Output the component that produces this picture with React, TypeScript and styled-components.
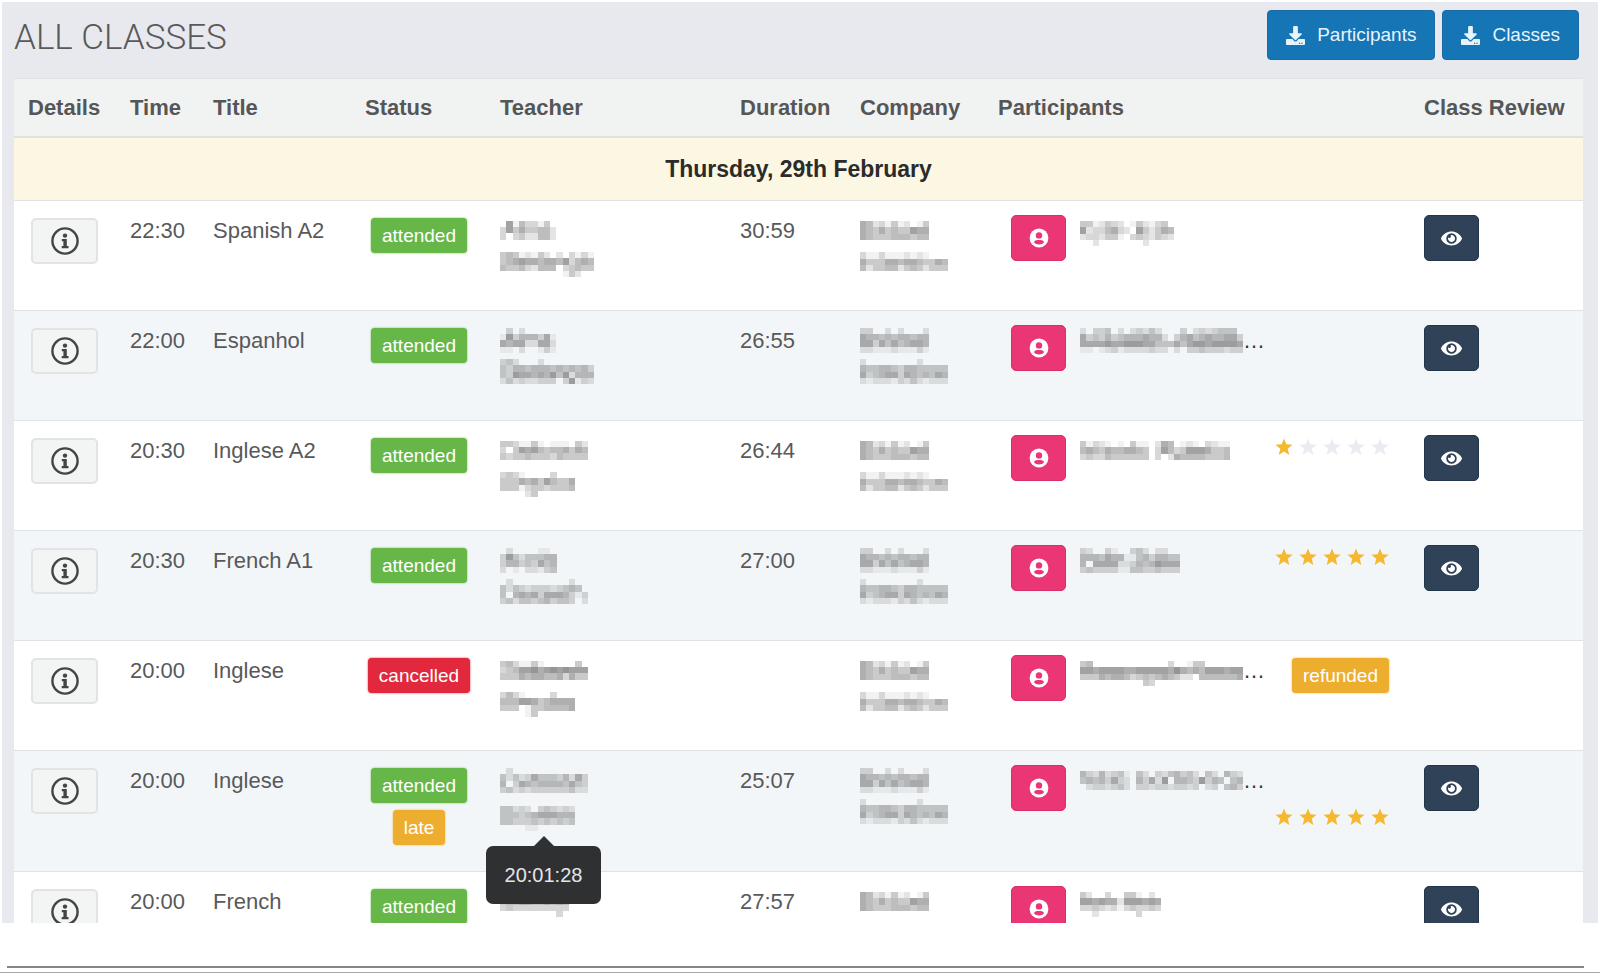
import React from 'react';
import styled, { createGlobalStyle, css } from 'styled-components';
import { FaDownload, FaEye } from 'react-icons/fa';

const GlobalStyle = createGlobalStyle`
  * { box-sizing: border-box; }
  body {
    margin: 0;
    background: #fff;
    color: #58595b;
    font-family: "Liberation Sans", Arial, Helvetica, sans-serif;
    font-size: 22px;
    line-height: 32px;
  }
`;

const Page = styled.div`
  display: flex;
  flex-direction: column;
  height: 100vh;
`;

const Panel = styled.main`
  flex: 1;
  min-height: 0;
  margin: 2px 2px 0;
  padding: 8px 15px 0 12px;
  overflow: hidden;
  background: #e8e9ee;
`;

const Toolbar = styled.header`
  display: flex;
  align-items: flex-start;
  justify-content: space-between;
  height: 68px;
  padding-right: 4px;
`;

const Heading = styled.h1`
  margin: 8px 0 0;
  font-family: Roboto, "Liberation Sans", sans-serif;
  font-size: 35px;
  font-weight: 300;
  line-height: 40px;
`;

const Actions = styled.div`
  display: flex;
  gap: 7px;
`;

const ExportButton = styled.button`
  display: flex;
  align-items: center;
  gap: 12px;
  height: 50px;
  padding: 0 18px;
  border: 1px solid #1a6ba5;
  border-radius: 4px;
  background: #1575b5;
  color: #e6f4fd;
  font: inherit;
  font-size: 19px;
`;

const Table = styled.table`
  width: 100%;
  table-layout: fixed;
  border-collapse: separate;
  border-spacing: 0;
`;

const HeadCell = styled.th`
  height: 60px;
  padding: 0 0 0 14px;
  border-top: 1px solid #e0e2e3;
  border-bottom: 2px solid #e0e2e1;
  background: #f1f3f3;
  color: #555657;
  text-align: left;
  white-space: nowrap;
`;

const DateCell = styled.th`
  height: 62px;
  padding: 0;
  background: #fcf7e2;
  color: #2b2b2b;
  font-size: 23px;
`;

const Row = styled.tr<{ $tall?: boolean }>`
  height: ${(p) => (p.$tall ? 121 : 110)}px;
  background: #fff;
  &:nth-child(odd) { background: #f3f6f8; }
`;

const Cell = styled.td`
  position: relative;
  padding: 14px 0 0 14px;
  border-top: 1px solid #e0e3e6;
  vertical-align: top;
`;

const buttonBase = css`
  display: flex;
  align-items: center;
  justify-content: center;
  height: 46px;
  padding: 0;
  border-radius: 5px;
`;

const InfoButton = styled.button`
  ${buttonBase}
  width: 67px;
  margin: 3px 0 0 3px;
  border: 2px solid #e2e3e4;
  background: #f3f4f4;
  color: #444;
`;

const PersonButton = styled.button`
  ${buttonBase}
  flex: none;
  width: 55px;
  border: 1px solid #d82f65;
  background: #ea3674;
  color: #fff;
`;

const ReviewButton = styled.button`
  ${buttonBase}
  width: 55px;
  border: 1px solid #22364b;
  background: #2f4257;
  color: #fff;
`;

const badgeColors = {
  attended: '#67b748',
  cancelled: '#e2283c',
  late: '#edae2f',
  refunded: '#edae2f',
};

type BadgeKind = keyof typeof badgeColors;

const BadgeStack = styled.div`
  display: flex;
  flex-direction: column;
  align-items: center;
  gap: 7px;
  padding: 3px 13px 0 0;
`;

const Badge = styled.span<{ $kind: BadgeKind }>`
  height: 35px;
  padding: 0 11px;
  border-radius: 4px;
  background: ${(p) => badgeColors[p.$kind]};
  box-shadow: 0 0 2px ${(p) => badgeColors[p.$kind]};
  color: #fff;
  font-size: 19px;
  line-height: 36px;
`;

const Participant = styled.div`
  display: flex;
  gap: 14px;
  padding: 0 21px 0 13px;
`;

const NameSlot = styled.div`
  display: flex;
  flex: 1;
  min-width: 0;
  color: #333;
`;

const Extra = styled.div<{ $low?: boolean }>`
  display: flex;
  align-items: flex-start;
  padding-top: ${(p) => (p.$low ? 43 : 3)}px;
`;

const Stars = styled.div`
  display: flex;
  gap: 6px;
`;

const Tooltip = styled.div`
  position: absolute;
  z-index: 2;
  top: 95px;
  left: 0;
  width: 115px;
  padding: 13px 0;
  border-radius: 7px;
  background: #2f3032;
  color: #e4e5e6;
  font-size: 20px;
  text-align: center;
  &::before {
    content: "";
    position: absolute;
    top: -10px;
    left: 48px;
    border: solid transparent;
    border-width: 0 10px 10px;
    border-bottom-color: #2f3032;
  }
`;

const Footer = styled.footer`
  display: flex;
  flex-direction: column;
  justify-content: flex-end;
  height: 50px;
  padding-bottom: 4px;
  border-bottom: 1px solid #a8a8a8;
  &::before {
    content: "";
    height: 2px;
    margin: 0 16px 0 7px;
    background: #858585;
  }
`;

const MosaicSvg = styled.svg<{ $high?: boolean }>`
  display: block;
  flex: none;
  margin-top: ${(p) => (p.$high ? 3 : 6)}px;
`;

const CELL = 6.25;

/* Redacted name: one digit per block, 0 is clear and 9 is darkest. */
function Mosaic({ rows, high }: { rows: string[]; high?: boolean }) {
  const cols = Math.max(...rows.map((r) => r.length));
  return (
    <MosaicSvg
      $high={high}
      role="img"
      aria-label="Name hidden"
      width={Math.round(cols * CELL)}
      height={Math.round(rows.length * CELL)}
      viewBox={`0 0 ${cols} ${rows.length}`}
      preserveAspectRatio="none"
      shapeRendering="crispEdges"
    >
      {rows.flatMap((row, y) =>
        [...row].map((d, x) =>
          d === '0' ? null : (
            <rect key={`${x}-${y}`} x={x} y={y} width="1" height="1" fill="#000" fillOpacity={Number(d) * 0.052} />
          ),
        ),
      )}
    </MosaicSvg>
  );
}

function InfoIcon() {
  return (
    <svg width="28" height="28" viewBox="0 0 28 28" aria-hidden="true">
      <circle cx="14" cy="14" r="12.6" fill="none" stroke="currentColor" strokeWidth="2.4" />
      <circle cx="14" cy="8.6" r="2.2" fill="currentColor" />
      <path d="M10.8 12h5v7h1.7v2.2h-6.8V19h1.7v-4.800h-1.600z" fill="currentColor" />
    </svg>
  );
}

function PersonIcon() {
  return (
    <svg width="20" height="20" viewBox="0 0 20 20" aria-hidden="true">
      <circle cx="10" cy="10" r="9.4" fill="currentColor" />
      <circle cx="10" cy="7.400" r="3.200" fill="#ea3674" />
      <path d="M5 14.300c0-1.700 2.300-2.300 5-2.300s5 .6 5 2.300c-1 1.600-3 2.200-5 2.200s-4-.6-5-2.200z" fill="#ea3674" />
    </svg>
  );
}

function Star({ filled }: { filled: boolean }) {
  return (
    <svg width="18" height="18" viewBox="0 0 18 18" aria-hidden="true">
      <path
        d="M9 .4l2.300 5.900 6.300.4-4.900 4 1.600 6.300L9 13.500 3.700 17l1.600-6.300-4.900-4 6.300-.4z"
        fill={filled ? '#f5b82e' : '#ebecf2'}
      />
    </svg>
  );
}

const companyPlain = [
  '65231412014', '65464544766', '65444555455', '0', '0',
  '31131112121000', '64446656654465', '52445524542444',
];
const companyStriped = [
  '33002020002', '65545455455', '66364645665', '22111211131', '0',
  '20000000020000', '54455435544444', '63456636545465', '21222132421222',
];

const almaPlain = [
  '071533140', '374644552', '303422552', '0', '0',
  '454121420203131', '456766566573565', '544532555034544', '000000000014200',
];
const almaStriped = [
  '0302', '173555361', '656622662', '110200131', '0',
  '342000200000000', '435545554545453', '437665657472555', '242322333037132',
];
const deborahPlain = [
  '44311410111042', '30476754556465', '43445444354444', '0', '0',
  '343100003', '444656475446', '444134434445', '00002400',
];
const deborahStriped = [
  '02000000000000', '42423644435263', '50365455554643', '34232333333422', '0', '0',
  '442320343232', '444345666555', '443334343434', '00001100',
];
const deborahDark = [
  '45311410000040', '34577867878777', '44465665563644', '0', '0',
  '353100003', '555776456666', '444014455556', '00001400',
];
const anaisStriped = [
  '020000110', '374244455', '355343645', '201022134', '0',
  '02000000000200', '42432333234540', '40565636665313', '34244345344302',
];
const lastTeacher = ['34311410030', '45566556565', '34333333333', '00000000030'];

interface Lesson {
  time: string;
  title: string;
  status: BadgeKind[];
  teacher: string[];
  duration?: string;
  name: string[];
  truncated?: boolean;
  stars?: number;
  refunded?: boolean;
  tooltip?: string;
}

const lessons: Lesson[] = [
  {
    time: '22:30', title: 'Spanish A2', status: ['attended'], teacher: almaPlain, duration: '30:59',
    name: ['441243201421340', '723356320742465', '233244103432432', '002000000020000'],
  },
  {
    time: '22:00', title: 'Espanhol', status: ['attended'], teacher: almaStriped, duration: '26:55', truncated: true,
    name: ['20334020232420003023234440', '63435345556552035645655663', '66667667776644464677677776', '11012312222322020334333233'],
  },
  {
    time: '20:30', title: 'Inglese A2', status: ['attended'], teacher: deborahPlain, duration: '26:44', stars: 1,
    name: ['413210104110265012103211', '565465566540375347776445', '343354444440302655554445'],
  },
  {
    time: '20:30', title: 'French A1', status: ['attended'], teacher: anaisStriped, duration: '27:00', stars: 5,
    name: ['3200310034202200', '5554655114535544', '5066662235457666', '3433331144334333'],
  },
  {
    time: '20:00', title: 'Inglese', status: ['cancelled'], teacher: deborahDark, truncated: true, refunded: true,
    name: ['45000000000000300144000000', '77677776677777686565777677', '44465665345456542205555556', '00000000004300000000000000'],
  },
  {
    time: '20:00', title: 'Inglese', status: ['attended', 'late'], teacher: deborahStriped, duration: '25:07', stars: 5,
    truncated: true, tooltip: '20:01:28',
    name: ['53252341042032453420420532', '45453632053627055437354045', '02332342033233233230230453'],
  },
  {
    time: '20:00', title: 'French', status: ['attended'], teacher: lastTeacher, duration: '27:57',
    name: ['4200300441020', '7767662777676', '3343231343343', '0020000003000'],
  },
];

const columns: { label: string; width?: number }[] = [
  { label: 'Details', width: 102 },
  { label: 'Time', width: 83 },
  { label: 'Title', width: 152 },
  { label: 'Status', width: 135 },
  { label: 'Teacher', width: 240 },
  { label: 'Duration', width: 120 },
  { label: 'Company', width: 138 },
  { label: 'Participants' },
  { label: 'Class Review', width: 173 },
];

function LessonRow({ lesson, striped }: { lesson: Lesson; striped: boolean }) {
  const twoBadges = lesson.status.length > 1;
  return (
    <Row $tall={twoBadges}>
      <Cell>
        <InfoButton type="button" aria-label="Class details"><InfoIcon /></InfoButton>
      </Cell>
      <Cell>{lesson.time}</Cell>
      <Cell>{lesson.title}</Cell>
      <Cell>
        <BadgeStack>
          {lesson.status.map((s) => <Badge key={s} $kind={s}>{s}</Badge>)}
        </BadgeStack>
      </Cell>
      <Cell>
        <Mosaic rows={lesson.teacher} high={striped} />
        {lesson.tooltip && <Tooltip role="tooltip">{lesson.tooltip}</Tooltip>}
      </Cell>
      <Cell>{lesson.duration}</Cell>
      <Cell><Mosaic rows={striped ? companyStriped : companyPlain} high={striped} /></Cell>
      <Cell>
        <Participant>
          <PersonButton type="button" aria-label="Participant profile"><PersonIcon /></PersonButton>
          <NameSlot>
            <Mosaic rows={lesson.name} high={striped && lesson.name.length > 3} />
            {lesson.truncated && <span>…</span>}
          </NameSlot>
          <Extra $low={twoBadges}>
            {lesson.refunded && <Badge $kind="refunded">refunded</Badge>}
            {lesson.stars && (
              <Stars role="img" aria-label={`${lesson.stars} of 5 stars`}>
                {[1, 2, 3, 4, 5].map((n) => <Star key={n} filled={n <= lesson.stars!} />)}
              </Stars>
            )}
          </Extra>
        </Participant>
      </Cell>
      <Cell>
        {!lesson.refunded && (
          <ReviewButton type="button" aria-label="Review class"><FaEye size={21} /></ReviewButton>
        )}
      </Cell>
    </Row>
  );
}

export default function App() {
  return (
    <Page>
      <GlobalStyle />
      <Panel>
        <Toolbar>
          <Heading>ALL CLASSES</Heading>
          <Actions>
            <ExportButton type="button"><FaDownload size={19} />Participants</ExportButton>
            <ExportButton type="button"><FaDownload size={19} />Classes</ExportButton>
          </Actions>
        </Toolbar>
        <Table>
          <colgroup>
            {columns.map((c) => <col key={c.label} width={c.width} />)}
          </colgroup>
          <thead>
            <tr>
              {columns.map((c) => <HeadCell key={c.label} scope="col">{c.label}</HeadCell>)}
            </tr>
          </thead>
          <tbody>
            <tr><DateCell colSpan={columns.length} scope="colgroup">Thursday, 29th February</DateCell></tr>
            {lessons.map((lesson, i) => (
              <LessonRow key={i} lesson={lesson} striped={i % 2 === 1} />
            ))}
          </tbody>
        </Table>
      </Panel>
      <Footer />
    </Page>
  );
}
